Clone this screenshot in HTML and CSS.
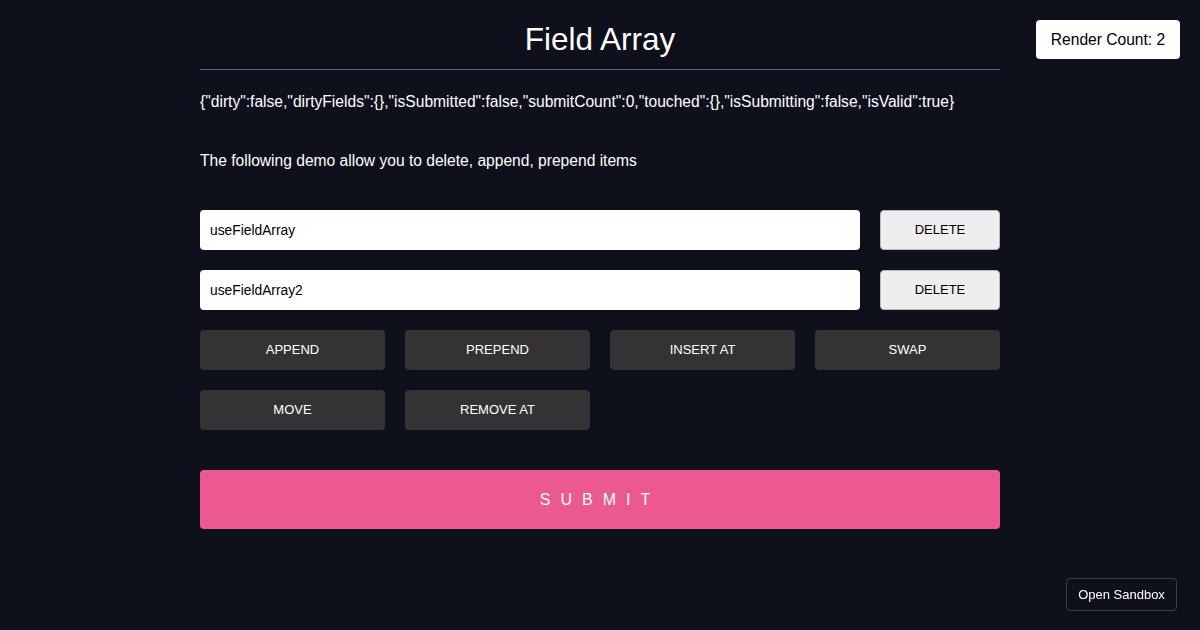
FILE: index.html
```html
<!DOCTYPE html>
<html lang="en">
<head>
    <meta charset="UTF-8">
    <meta name="viewport" content="width=device-width, initial-scale=1.0">
    <title>Field Array</title>
    <link rel="stylesheet" href="styles.css">
</head>
<body>
    <div class="counter">Render Count: 2</div>
    <div class="container">
        <h1 class="title">Field Array</h1>
        <p class="state">{"dirty":false,"dirtyFields":{},"isSubmitted":false,"submitCount":0,"touched":{},"isSubmitting":false,"isValid":true}</p>
        <p class="intro">The following demo allow you to delete, append, prepend items</p>
        <form class="form">
            <ul class="fields">
                <li class="field-row">
                    <input class="field-input" type="text" value="useFieldArray">
                    <button type="button" class="btn-delete">DELETE</button>
                </li>
                <li class="field-row">
                    <input class="field-input" type="text" value="useFieldArray2">
                    <button type="button" class="btn-delete">DELETE</button>
                </li>
            </ul>
            <div class="actions">
                <button type="button" class="btn">APPEND</button>
                <button type="button" class="btn">PREPEND</button>
                <button type="button" class="btn">INSERT AT</button>
                <button type="button" class="btn">SWAP</button>
                <button type="button" class="btn">MOVE</button>
                <button type="button" class="btn">REMOVE AT</button>
            </div>
            <button type="submit" class="btn-submit">SUBMIT</button>
        </form>
    </div>
    <button class="sandbox">Open Sandbox</button>
</body>
</html>
```

FILE: styles.css
```css
body {
    margin: 0;
    padding: 0;
    background: #0e101c;
    color: #fff;
    font-family: "Liberation Sans", Arial, Helvetica, sans-serif;
}
.container {
    width: 800px;
    margin: 0 auto;
}
.title {
    margin: 0;
    padding: 21px 0 11px;
    font-size: 31.5px;
    font-weight: 100;
    text-align: center;
    border-bottom: 1px solid rgb(79, 98, 148);
}
.state {
    margin: 22px 0 0;
    font-size: 15.6px;
    line-height: 20px;
}
.intro {
    margin: 39px 0 0;
    font-size: 15.6px;
    line-height: 20px;
}
.form {
    margin-top: 39px;
}
.fields {
    list-style: none;
    margin: 0;
    padding: 0;
    display: flex;
    flex-direction: column;
    gap: 20px;
}
.field-row {
    display: flex;
    gap: 20px;
}
.field-input {
    flex: 1;
    height: 40px;
    box-sizing: border-box;
    border: none;
    border-radius: 4px;
    padding: 0 10px;
    font-family: inherit;
    font-size: 13.8px;
    color: #000;
    background: #fff;
    outline: 0;
}
.btn-delete {
    width: 120px;
    height: 40px;
    box-sizing: border-box;
    padding: 0 0 2px;
    background: #eee;
    border: 1px solid #bbb;
    border-radius: 4px;
    font-family: inherit;
    font-size: 13px;
    color: #000;
}
.actions {
    margin-top: 20px;
    display: grid;
    grid-template-columns: repeat(4, 1fr);
    gap: 20px;
}
.btn {
    height: 40px;
    padding: 0 0 2px;
    background: #333;
    border: none;
    border-radius: 4px;
    color: #fff;
    font-family: inherit;
    font-size: 13px;
}
.btn-submit {
    display: block;
    width: 100%;
    height: 59px;
    margin-top: 40px;
    background: #ec5990;
    border: none;
    border-radius: 4px;
    color: #fff;
    font-family: inherit;
    font-size: 16px;
    letter-spacing: 10px;
}
.counter {
    position: absolute;
    top: 20px;
    right: 20px;
    width: 144px;
    height: 39px;
    line-height: 39px;
    text-align: center;
    background: #fff;
    color: #000;
    border-radius: 4px;
    font-size: 15.6px;
}
.sandbox {
    position: fixed;
    right: 23px;
    bottom: 19px;
    width: 111px;
    height: 33px;
    background: transparent;
    border: 1px solid #3a3c47;
    border-radius: 4px;
    color: #fff;
    font-family: inherit;
    font-size: 13px;
}
```
